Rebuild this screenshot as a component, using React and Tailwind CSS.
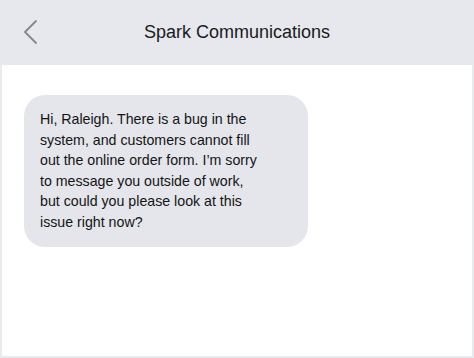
import React from 'react';

const lines = [
  'Hi, Raleigh. There is a bug in the',
  'system, and customers cannot fill',
  'out the online order form. I’m sorry',
  'to message you outside of work,',
  'but could you please look at this',
  'issue right now?',
];

export default function App() {
  return (
    <div
      className="w-[474px] h-[358px] bg-[#e8eaee] flex flex-col px-[2px] pb-[2px] overflow-hidden"
      style={{ fontFamily: '"Liberation Sans", Arial, sans-serif' }}
    >
      {/* Header */}
      <header className="h-[65px] -mx-[2px] bg-[#e6e8ed] flex items-center relative shrink-0">
        <button className="absolute left-[22px] top-[18px] p-0" aria-label="Back">
          <svg width="16" height="28" viewBox="0 0 16 28" fill="none">
            <path d="M14 3 L3 14 L14 25" stroke="#86878b" strokeWidth="1.8" strokeLinecap="round" strokeLinejoin="round" />
          </svg>
        </button>
        <h1 className="flex-1 text-center text-[18px] text-[#1a1a1a] font-normal">Spark Communications</h1>
      </header>

      {/* Messages */}
      <main className="flex-1 bg-white pt-[30px] pl-[22px]">
        <div className="w-[284px] bg-[#e4e6eb] rounded-[21px] pl-[16px] pr-[6px] pt-[14px] pb-[14px]">
          <p className="text-[14.2px] leading-[20.6px] text-[#141414] whitespace-nowrap">
            {lines.map((l, i) => (
              <React.Fragment key={i}>
                {l}
                {i < lines.length - 1 && <br />}
              </React.Fragment>
            ))}
          </p>
        </div>
      </main>
    </div>
  );
}
